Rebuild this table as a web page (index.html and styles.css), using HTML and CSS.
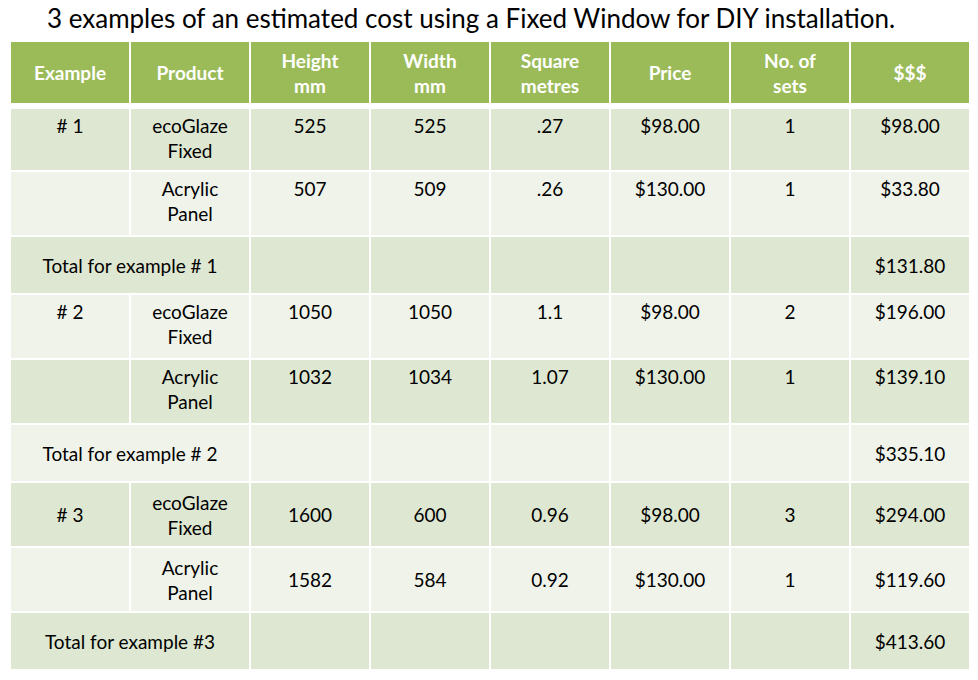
FILE: index.html
```html
<!DOCTYPE html>
<html>
<head>
<meta charset="utf-8">
<link rel="stylesheet" href="styles.css">
</head>
<body>
<h1 class="title">3 examples of an estimated cost using a Fixed Window for DIY installation.</h1>
<table class="cost">
  <colgroup>
    <col><col><col><col><col><col><col><col>
  </colgroup>
  <thead>
    <tr>
      <th>Example</th><th>Product</th><th>Height<br>mm</th><th>Width<br>mm</th><th>Square<br>metres</th><th>Price</th><th>No. of<br>sets</th><th>$$$</th>
    </tr>
  </thead>
  <tbody>
    <tr class="dark top r61">
      <td># 1</td><td>ecoGlaze<br>Fixed</td><td>525</td><td>525</td><td>.27</td><td>$98.00</td><td>1</td><td>$98.00</td>
    </tr>
    <tr class="light top r63">
      <td></td><td>Acrylic<br>Panel</td><td>507</td><td>509</td><td>.26</td><td>$130.00</td><td>1</td><td>$33.80</td>
    </tr>
    <tr class="dark mid total">
      <td colspan="2">Total for example # 1</td><td></td><td></td><td></td><td></td><td></td><td>$131.80</td>
    </tr>
    <tr class="light top r63">
      <td># 2</td><td>ecoGlaze<br>Fixed</td><td>1050</td><td>1050</td><td>1.1</td><td>$98.00</td><td>2</td><td>$196.00</td>
    </tr>
    <tr class="dark top r63">
      <td></td><td>Acrylic<br>Panel</td><td>1032</td><td>1034</td><td>1.07</td><td>$130.00</td><td>1</td><td>$139.10</td>
    </tr>
    <tr class="light mid total">
      <td colspan="2">Total for example # 2</td><td></td><td></td><td></td><td></td><td></td><td>$335.10</td>
    </tr>
    <tr class="dark mid r63">
      <td># 3</td><td>ecoGlaze<br>Fixed</td><td>1600</td><td>600</td><td>0.96</td><td>$98.00</td><td>3</td><td>$294.00</td>
    </tr>
    <tr class="light mid r63">
      <td></td><td>Acrylic<br>Panel</td><td>1582</td><td>584</td><td>0.92</td><td>$130.00</td><td>1</td><td>$119.60</td>
    </tr>
    <tr class="dark mid total">
      <td colspan="2">Total for example #3</td><td></td><td></td><td></td><td></td><td></td><td>$413.60</td>
    </tr>
  </tbody>
</table>
</body>
</html>
```

FILE: styles.css
```css
html, body {
  margin: 0;
  padding: 0;
  background: #ffffff;
}

body {
  font-family: Lato, "Open Sans", sans-serif;
  color: #000000;
}

.title {
  margin: 0;
  padding: 3px 0 0 47px;
  height: 40px;
  box-sizing: border-box;
  font-weight: 400;
  font-size: 26px;
  line-height: 30px;
  white-space: nowrap;
}

.cost {
  margin-left: 9px;
  border-collapse: separate;
  border-spacing: 2px;
  table-layout: fixed;
  width: 962px;
  font-size: 19px;
  line-height: 25px;
}

.cost col {
  width: 118px;
}

.cost th,
.cost td {
  padding: 0;
  text-align: center;
}

.cost th {
  background: #9bbb59;
  color: #ffffff;
  font-weight: 700;
  height: 61px;
  vertical-align: middle;
  border-bottom: 4px solid #ffffff;
}

.cost .dark td {
  background: #dee7d1;
}

.cost .light td {
  background: #eff3ea;
}

.cost .top td {
  vertical-align: top;
  padding-top: 4px;
}

.cost .mid td {
  vertical-align: middle;
}

.cost .r61 td {
  height: 57px;
}

.cost .r63 td {
  height: 59px;
}

.cost .mid.r63 td {
  height: 63px;
}

.cost .total td {
  height: 56px;
}
```
